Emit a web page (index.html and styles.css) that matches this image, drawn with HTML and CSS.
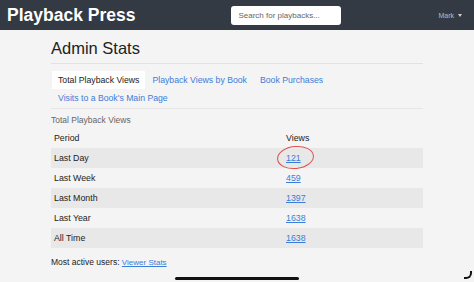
FILE: index.html
```html
<!DOCTYPE html>
<html lang="en">
<head>
    <meta charset="UTF-8">
    <meta name="viewport" content="width=device-width, initial-scale=1.0">
    <title>Admin Stats</title>
    <link rel="stylesheet" href="styles.css">
</head>
<body>

    <nav class="navbar">
        <a class="brand" href="#">Playback Press</a>
        <input class="search" type="text" placeholder="Search for playbacks...">
        <span class="user">Mark <span class="caret"></span></span>
    </nav>

    <div class="container">
        <h1>Admin Stats</h1>

        <ul class="tabs">
            <li class="active">Total Playback Views</li>
            <li><a href="#">Playback Views by Book</a></li>
            <li><a href="#">Book Purchases</a></li>
            <li><a href="#">Visits to a Book's Main Page</a></li>
        </ul>

        <div class="section-title">Total Playback Views</div>

        <table class="stats">
            <thead>
                <tr><th>Period</th><th>Views</th></tr>
            </thead>
            <tbody>
                <tr><td>Last Day</td><td><a href="#" class="circled">121</a></td></tr>
                <tr><td>Last Week</td><td><a href="#">459</a></td></tr>
                <tr><td>Last Month</td><td><a href="#">1397</a></td></tr>
                <tr><td>Last Year</td><td><a href="#">1638</a></td></tr>
                <tr><td>All Time</td><td><a href="#">1638</a></td></tr>
            </tbody>
        </table>

        <p class="footer-note">Most active users: <a href="#">Viewer Stats</a></p>
    </div>

    <div class="home-bar"></div>
    <div class="corner"></div>

</body>
</html>
```

FILE: styles.css
```css
body {
    margin: 0;
    font-family: "Liberation Sans", Arial, sans-serif;
    background-color: #f4f4f4;
    color: #222;
    height: 282px;
    overflow: hidden;
    position: relative;
}
a {
    color: #3b7dd8;
    text-decoration: none;
}
.navbar {
    height: 30px;
    background-color: #343a44;
    display: flex;
    align-items: center;
    padding: 0 12px 0 7px;
}
.brand {
    color: #fff;
    font-weight: bold;
    font-size: 17.5px;
    margin-right: auto;
}
.search {
    width: 110px;
    height: 19px;
    box-sizing: border-box;
    border: none;
    border-radius: 3px;
    padding: 0 7px;
    font-family: inherit;
    font-size: 8px;
    margin-right: 97px;
}
.search::placeholder {
    color: #666;
}
.user {
    color: #bbb;
    font-size: 7px;
    display: flex;
    align-items: center;
    gap: 4px;
}
.caret {
    width: 0;
    height: 0;
    border-left: 2.5px solid transparent;
    border-right: 2.5px solid transparent;
    border-top: 3px solid #ccc;
}
.container {
    width: 372px;
    margin: 0 auto;
}
h1 {
    font-weight: normal;
    font-size: 16.5px;
    margin: 0;
    padding: 9px 0 5px;
    border-bottom: 1px solid #e2e2e2;
    color: #222;
}
.tabs {
    list-style: none;
    margin: 0;
    padding: 7px 0 1px 1px;
    display: flex;
    flex-wrap: wrap;
    border-bottom: 1px solid #e6e6e6;
    font-size: 8.7px;
}
.tabs li {
    padding: 3px 6px;
    line-height: 12px;
    margin-right: 1px;
}
.tabs li.active {
    background-color: #fff;
    color: #222;
}
.section-title {
    color: #666;
    font-size: 8.5px;
    line-height: 10px;
    padding: 6px 0 3px;
}
.stats {
    width: 100%;
    border-collapse: collapse;
    font-size: 8.8px;
}
.stats th {
    font-weight: normal;
    text-align: left;
    padding: 0 3px;
    height: 20px;
    color: #222;
}
.stats th:first-child {
    width: 226px;
}
.stats td {
    padding: 0 3px;
    height: 20px;
}
.stats tbody tr:nth-child(odd) {
    background-color: #e8e8e8;
}
.stats td a {
    text-decoration: underline;
}
.circled {
    position: relative;
}
.circled::after {
    content: "";
    position: absolute;
    left: -9px;
    top: -7px;
    width: 35px;
    height: 21px;
    border: 1px solid #d9534f;
    border-radius: 50%;
    transform: rotate(-6deg);
}
.footer-note {
    font-size: 8.5px;
    color: #222;
    margin: 9px 0 0;
}
.footer-note a {
    text-decoration: underline;
    font-size: 8px;
}
.home-bar {
    position: absolute;
    left: 175px;
    top: 277px;
    width: 124px;
    height: 3px;
    border-radius: 2px;
    background-color: #111;
}
.corner {
    position: absolute;
    right: 2px;
    bottom: 3px;
    width: 6px;
    height: 6px;
    border-right: 2px solid #111;
    border-bottom: 2px solid #111;
    border-bottom-right-radius: 6px;
}
```
